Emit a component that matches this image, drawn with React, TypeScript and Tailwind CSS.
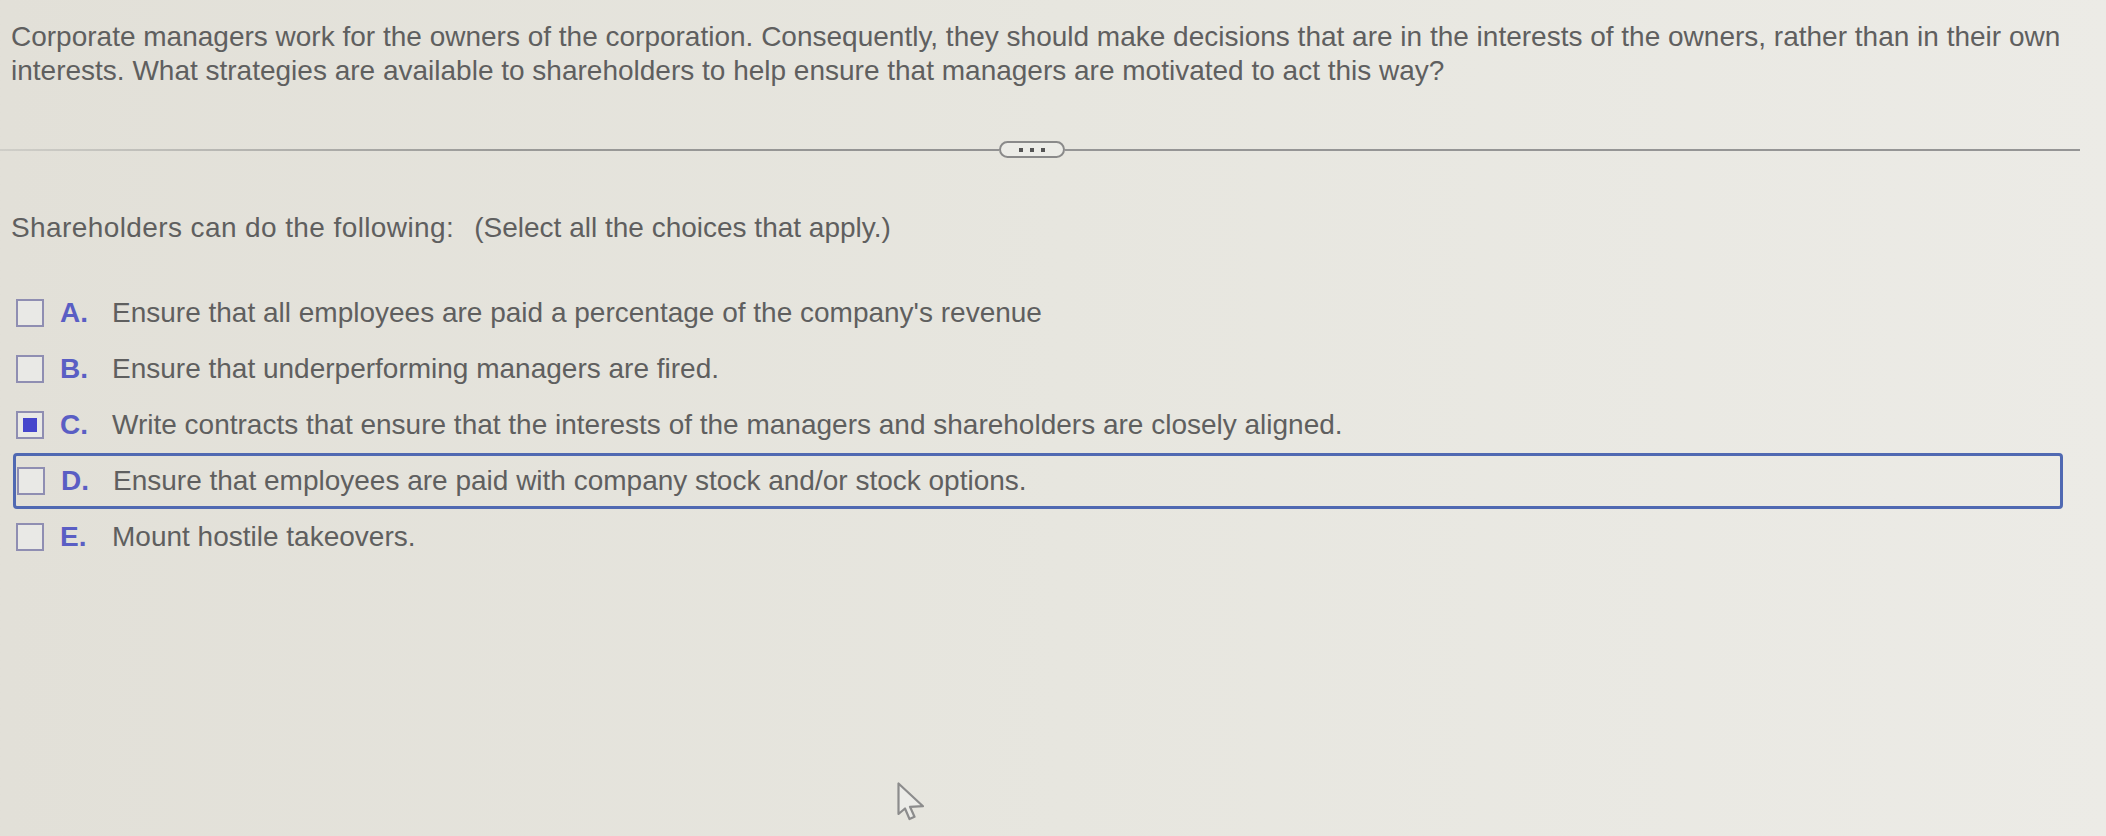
import React from "react";

type Choice = { key: string; text: string; checked?: boolean; focused?: boolean };

const CHOICES: Choice[] = [
  { key: "A", text: "Ensure that all employees are paid a percentage of the company's revenue" },
  { key: "B", text: "Ensure that underperforming managers are fired." },
  { key: "C", text: "Write contracts that ensure that the interests of the managers and shareholders are closely aligned.", checked: true },
  { key: "D", text: "Ensure that employees are paid with company stock and/or stock options.", focused: true },
  { key: "E", text: "Mount hostile takeovers." },
];

function Checkbox({ checked }: { checked?: boolean }) {
  return (
    <span className="flex h-[28px] w-[28px] shrink-0 items-center justify-center border-2 border-[#8f8eb2] bg-[#e9e9e6]">
      {checked && <span className="h-[14px] w-[14px] bg-[#4646cc]" />}
    </span>
  );
}

function ChoiceRow({ choice }: { choice: Choice }) {
  const inner = (
    <>
      <Checkbox checked={choice.checked} />
      <span className="ml-[16px] w-[52px] shrink-0 font-bold text-[#5a5ec4]">{choice.key}.</span>
      <span>{choice.text}</span>
    </>
  );

  if (choice.focused) {
    return (
      <div className="ml-[13px] flex h-[56px] w-[2050px] items-center rounded-[4px] border-[3px] border-[#5069b2] pl-[1px]">
        {inner}
      </div>
    );
  }
  return <div className="flex h-[56px] items-center pl-[16px]">{inner}</div>;
}

export default function App() {
  return (
    <div
      className="relative h-[836px] w-[2106px] overflow-hidden bg-gradient-to-r from-[#e2e0d8] via-[#e7e6df] to-[#ecebe6] text-[28px] leading-[34px] text-[#5f5f5f]"
      style={{ fontFamily: '"Liberation Sans", Arial, Helvetica, sans-serif' }}
    >
      {/* Question */}
      <p className="w-[2075px] pl-[11px] pt-[20px]">
        Corporate managers work for the owners of the corporation. Consequently, they should make decisions that are in
        the interests of the owners, rather than in their own interests. What strategies are available to shareholders to
        help ensure that managers are motivated to act this way?
      </p>

      {/* Divider with collapse pill */}
      <div className="mt-[53px] flex h-[17px] w-[2080px] items-center">
        <div className="h-[2px] w-[999px] bg-gradient-to-r from-[#cfcec8] via-[#9a9a98] to-[#929292]" />
        <button className="flex h-[17px] w-[66px] shrink-0 items-center justify-center gap-[7px] rounded-full border-2 border-[#8a8a8a] bg-[#ecece7]">
          <span className="h-[4px] w-[4px] bg-[#555]" />
          <span className="h-[4px] w-[4px] bg-[#555]" />
          <span className="h-[4px] w-[4px] bg-[#555]" />
        </button>
        <div className="h-[2px] flex-1 bg-[#959595]" />
      </div>

      {/* Prompt */}
      <p className="mt-[53px] pl-[11px]">
        <span className="tracking-[0.4px]">Shareholders can do the following:</span>
        <span className="ml-[20px]">(Select all the choices that apply.)</span>
      </p>

      {/* Choices */}
      <div className="mt-[40px] flex flex-col">
        {CHOICES.map((c) => (
          <ChoiceRow key={c.key} choice={c} />
        ))}
      </div>

      {/* Mouse pointer */}
      <svg
        className="absolute left-[897px] top-[782px]"
        width="30"
        height="40"
        viewBox="0 0 30 40"
        fill="none"
      >
        <path
          d="M1.5 1.5 L1.5 32 L8 26.5 L12.5 37 L17.5 34.8 L13 24.8 L26 24.2 Z"
          fill="#ecece8"
          stroke="#8c8c8c"
          strokeWidth="2.2"
          strokeLinejoin="round"
        />
      </svg>
    </div>
  );
}
